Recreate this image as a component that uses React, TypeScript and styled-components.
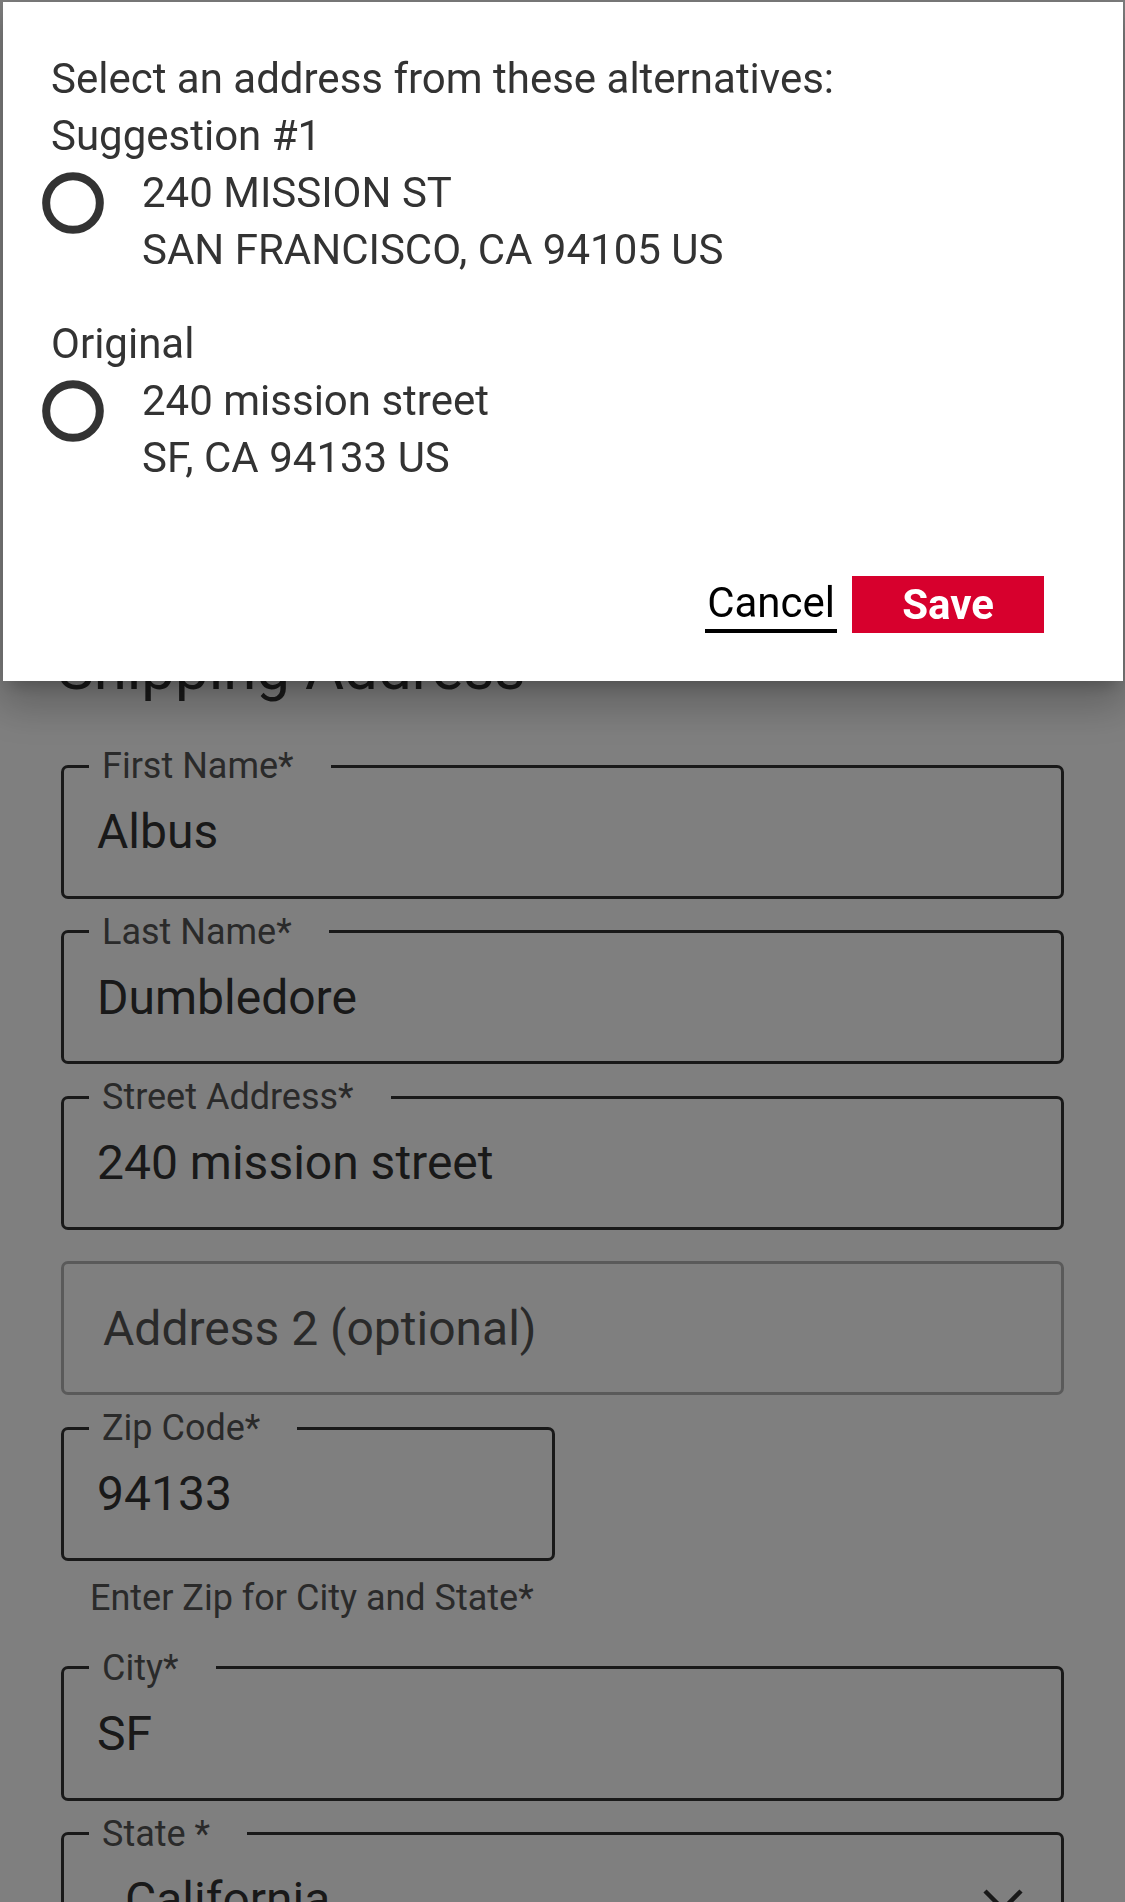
import React from 'react';
import styled, { createGlobalStyle } from 'styled-components';

const GlobalStyle = createGlobalStyle`
  html, body {
    margin: 0;
    padding: 0;
    overflow: hidden;
    background: #ffffff;
    font-family: Roboto, 'Liberation Sans', Arial, sans-serif;
  }
  * {
    box-sizing: border-box;
  }
`;

interface FieldProps {
  label?: string;
  value?: string;
  placeholder?: string;
  half?: boolean;
  muted?: boolean;
  select?: boolean;
}

const Field: React.FC<FieldProps> = ({ label, value, placeholder, half, muted, select }) => {
  return (
    <FieldBox $half={half} $muted={muted}>
      <Legend $empty={!label}>{label}</Legend>
      <ValueRow $select={select}>
        {placeholder ? <Placeholder>{placeholder}</Placeholder> : <Value $select={select}>{value}</Value>}
        {select && (
          <svg width="40" height="24" viewBox="0 0 40 24">
            <polyline points="2,4 20,22 38,4" fill="none" stroke="#333" strokeWidth="4.5" />
          </svg>
        )}
      </ValueRow>
    </FieldBox>
  );
};

const RadioIcon: React.FC = () => (
  <RadioSvg viewBox="0 0 24 24">
    <circle cx="12" cy="12" r="8.7" fill="none" stroke="#333" strokeWidth="2.6" />
  </RadioSvg>
);

const App: React.FC = () => {
  return (
    <>
      <GlobalStyle />
      <Page>
        <Heading>Shipping Address</Heading>
        <Form>
          <Field label="First Name*" value="Albus" />
          <Field label="Last Name*" value="Dumbledore" />
          <Field label="Street Address*" value="240 mission street" />
          <Field placeholder="Address 2 (optional)" muted />
          <Field label="Zip Code*" value="94133" half />
          <Helper>Enter Zip for City and State*</Helper>
          <Field label="City*" value="SF" />
          <Field label="State *" value="California" select />
        </Form>
      </Page>

      <Backdrop />

      <Dialog>
        <Line>Select an address from these alternatives:</Line>
        <Line>Suggestion #1</Line>
        <Option>
          <RadioIcon />
          <div>
            <Line>240 MISSION ST</Line>
            <Line>SAN FRANCISCO, CA 94105 US</Line>
          </div>
        </Option>

        <GroupLabel>Original</GroupLabel>
        <Option>
          <RadioIcon />
          <div>
            <Line>240 mission street</Line>
            <Line>SF, CA 94133 US</Line>
          </div>
        </Option>

        <Actions>
          <CancelButton>Cancel</CancelButton>
          <SaveButton>Save</SaveButton>
        </Actions>
      </Dialog>
    </>
  );
};

export default App;

const Page = styled.div`
  padding: 633px 61px 0 61px;
  color: #333;
`;

const Heading = styled.h2`
  margin: 0 0 40px -3px;
  font-size: 60px;
  line-height: 72px;
  font-weight: 400;
  color: #333;
`;

const Form = styled.div`
  display: flex;
  flex-direction: column;
  gap: 12px;
`;

const FieldBox = styled.fieldset<{ $half?: boolean; $muted?: boolean }>`
  margin: 0;
  min-width: 0;
  width: ${({ $half }) => ($half ? '494px' : '100%')};
  padding: 16px 24px 35px 25px;
  border: 3px solid ${({ $muted }) => ($muted ? '#b5b5b5' : '#333')};
  border-radius: 7px;
`;

const Legend = styled.legend<{ $empty?: boolean }>`
  padding: ${({ $empty }) => ($empty ? '0' : '0 37px 0 13px')};
  max-width: ${({ $empty }) => ($empty ? '0.01px' : 'none')};
  height: 42px;
  font-size: 36px;
  line-height: 42px;
  color: #555;
  white-space: nowrap;
`;

const ValueRow = styled.div<{ $select?: boolean }>`
  display: flex;
  align-items: center;
  justify-content: space-between;
  padding-right: ${({ $select }) => ($select ? '14px' : '0')};
`;

const Value = styled.div<{ $select?: boolean }>`
  margin-left: ${({ $select }) => ($select ? '36px' : '8px')};
  font-size: 48px;
  line-height: 57.6px;
  color: #333;
`;

const Placeholder = styled.div`
  margin-left: 14px;
  font-size: 48px;
  line-height: 57.6px;
  color: #555;
`;

const Helper = styled.div`
  margin: 4px 0 16px 29px;
  font-size: 36px;
  line-height: 42px;
  color: #555;
`;

const Backdrop = styled.div`
  position: fixed;
  inset: 0;
  background: rgba(0, 0, 0, 0.5);
`;

const Dialog = styled.div`
  position: fixed;
  top: 2px;
  left: 3px;
  right: 2px;
  padding: 48px 79px 48px 48px;
  background: #ffffff;
  color: #333;
  font-size: 42px;
  box-shadow: 0 11px 15px -7px rgba(0, 0, 0, 0.2), 0 24px 38px 3px rgba(0, 0, 0, 0.14),
    0 9px 46px 8px rgba(0, 0, 0, 0.12);
`;

const Line = styled.div`
  line-height: 57px;
  white-space: nowrap;
`;

const GroupLabel = styled(Line)`
  margin-top: 37px;
`;

const Option = styled.div`
  display: flex;
  align-items: flex-start;
  gap: 32px;
`;

const RadioSvg = styled.svg`
  flex: none;
  width: 74px;
  height: 74px;
  margin: 2px 0 0 -15px;
`;

const Actions = styled.div`
  display: flex;
  justify-content: flex-end;
  gap: 15px;
  margin-top: 90px;
`;

const CancelButton = styled.button`
  height: 57px;
  padding: 0 2px;
  border: none;
  border-bottom: 4px solid #000;
  background: none;
  font-family: inherit;
  font-size: 42px;
  color: #000;
`;

const SaveButton = styled.button`
  width: 192px;
  height: 57px;
  padding: 0;
  border: none;
  background: #d7002d;
  font-family: inherit;
  font-size: 42px;
  font-weight: 700;
  color: #ffffff;
`;
